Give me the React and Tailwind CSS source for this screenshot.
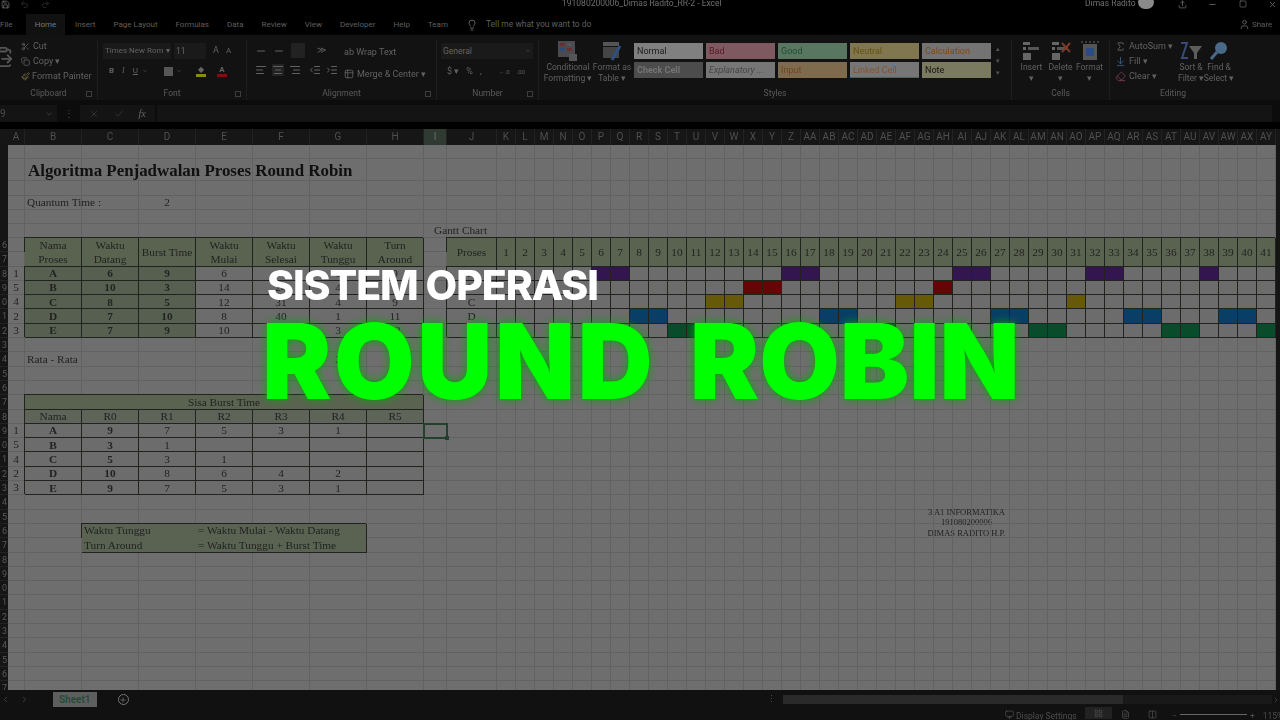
import {
  Save, Undo2, Redo2, ChevronDown, Lightbulb, User, Scissors, Copy, Paintbrush, ClipboardPaste, Minus, Square, X, Check,
  AlignLeft, AlignCenter, AlignRight, Indent, Outdent, Table2, Sigma, Eraser, ArrowDownToLine, Plus,
  ChevronLeft, ChevronRight, Monitor, LayoutGrid, FileText, Columns2, Upload,
} from "lucide-react";

const rowCount = 38;
const columnLetters = ["A", "B", "C", "D", "E", "F", "G", "H", "I", "J"];
"KLMNOPQRSTUVWXYZ".split("").forEach((l) => columnLetters.push(l));
"ABCDEFGHIJKLMNOPQRSTUVWXY".split("").forEach((l) => columnLetters.push("A" + l));

const GREEN = "bg-[#5a6350]";
const GREY = "bg-[#6c6c6c]";
const cells = new Map();

function put(c, r, text, opts = {}) {
  cells.set(c + "," + r, { text, cs: 1, rs: 1, kind: "box", bg: GREY, ...opts });
  const { cs = 1, rs = 1 } = opts;
  for (let y = r; y < r + rs; y++) {
    for (let x = c; x < c + cs; x++) {
      if (x !== c || y !== r) cells.set(x + "," + y, null);
    }
  }
}

// title and loose labels
put(1, 1, "Algoritma Penjadwalan Proses Round Robin", { kind: "title" });
put(1, 3, "Quantum Time :", { kind: "plain" });
put(3, 3, "2", { kind: "plainCenter" });
put(8, 5, "Gantt Chart", { kind: "gantt" });
put(1, 14, "Rata - Rata", { kind: "plain" });
put(6, 14, "2", { kind: "plainCenter" });
put(7, 14, "9", { kind: "plainCenter" });

// process table
["Nama\nProses", "Waktu\nDatang", "Burst Time", "Waktu\nMulai", "Waktu\nSelesai", "Waktu\nTunggu", "Turn\nAround"].forEach((h, i) =>
  put(i + 1, 6, h, { rs: 2, bg: GREEN })
);
[
  ["1", "A", "6", "9", "6", "38", "0", "9"],
  ["5", "B", "10", "3", "14", "24", "4", "7"],
  ["4", "C", "8", "5", "12", "31", "4", "9"],
  ["2", "D", "7", "10", "8", "40", "1", "11"],
  ["3", "E", "7", "9", "10", "41", "3", "12"],
].forEach((row, y) => {
  put(0, 8 + y, row[0], { kind: "plainCenter" });
  row.slice(1).forEach((v, x) =>
    put(x + 1, 8 + y, v, { bold: x < 3, bg: x < 3 ? "bg-[#576050]" : GREY })
  );
});

// remaining burst table
put(1, 17, "Sisa Burst Time", { cs: 7, bg: GREEN });
["Nama", "R0", "R1", "R2", "R3", "R4", "R5"].forEach((h, i) => put(i + 1, 18, h, { bg: "bg-[#5e6458]" }));
[
  ["1", "A", "9", "7", "5", "3", "1", ""],
  ["5", "B", "3", "1", "", "", "", ""],
  ["4", "C", "5", "3", "1", "", "", ""],
  ["2", "D", "10", "8", "6", "4", "2", ""],
  ["3", "E", "9", "7", "5", "3", "1", ""],
].forEach((row, y) => {
  put(0, 19 + y, row[0], { kind: "plainCenter" });
  row.slice(1).forEach((v, x) => put(x + 1, 19 + y, v, { bold: x < 2 }));
});
put(8, 19, "", { kind: "selected", bg: "" });

// formula note and credits
put(2, 26, "", { kind: "note", cs: 5, rs: 2, bg: "bg-[#5a6352]" });
put(34, 25, "3 A1 INFORMATIKA\n191080200006\nDIMAS RADITO H.P.", { kind: "credit" });

// gantt chart
put(9, 6, "Proses", { rs: 2, bg: GREEN });
for (let i = 1; i <= 41; i++) put(9 + i, 6, String(i), { rs: 2, bg: GREEN });
const ganttRows = {
  A: [[6, 7, 16, 17, 25, 26, 32, 33, 38], "bg-[#331650]"],
  B: [[14, 15, 24], "bg-[#640606]"],
  C: [[12, 13, 22, 23, 31], "bg-[#665a08]"],
  D: [[8, 9, 18, 19, 27, 28, 34, 35, 39, 40], "bg-[#093e66]"],
  E: [[10, 11, 20, 21, 29, 30, 36, 37, 41], "bg-[#094c2b]"],
};
Object.keys(ganttRows).forEach((name, y) => {
  const [slots, color] = ganttRows[name];
  put(9, 8 + y, name, {});
  for (let i = 1; i <= 41; i++) put(9 + i, 8 + y, "", { bg: slots.includes(i) ? color : GREY });
});

const frame = "border-r border-b border-[#20231e] shadow-[-1px_-1px_0_0_#20231e]";

function SheetCell({ c, r, cell }) {
  const place = { gridColumn: `${c + 1} / span ${cell ? cell.cs : 1}`, gridRow: `${r + 1} / span ${cell ? cell.rs : 1}` };
  if (!cell) {
    return <div style={place} className="border-r border-b border-[#626262]" />;
  }
  const base = "border-r border-b border-[#626262] flex items-center whitespace-nowrap text-[#222]";
  if (cell.kind === "title") {
    return <div style={place} className={`${base} pl-[3px] pt-[3px] text-[16.9px] font-bold text-[#101010]`}>{cell.text}</div>;
  }
  if (cell.kind === "plain") {
    return <div style={place} className={`${base} pl-[2px]`}>{cell.text}</div>;
  }
  if (cell.kind === "plainCenter") {
    return <div style={place} className={`${base} justify-center`}>{cell.text}</div>;
  }
  if (cell.kind === "gantt") {
    return <div style={place} className={`${base} pl-[10px]`}>{cell.text}</div>;
  }
  if (cell.kind === "selected") {
    return (
      <div style={place} className="relative outline-2 -outline-offset-1 outline-[#24402f]">
        <span className="absolute -right-[2px] -bottom-[2px] w-1 h-1 bg-[#24402f]" />
      </div>
    );
  }
  if (cell.kind === "note") {
    return (
      <div style={place} className={`${cell.bg} ${frame} grid grid-cols-[114px_1fr] content-center pl-[2px] leading-[14.3px] text-[#222] whitespace-nowrap`}>
        <span>Waktu Tunggu</span>
        <span>= Waktu Mulai - Waktu Datang</span>
        <span>Turn Around</span>
        <span>= Waktu Tunggu + Burst Time</span>
      </div>
    );
  }
  if (cell.kind === "credit") {
    return (
      <div style={place} className="border-r border-b border-[#626262] flex justify-center pl-[9px]">
        <div className="-mt-[3px] h-0 text-center text-[8.5px] leading-[10.5px] whitespace-pre text-[#222]">{cell.text}</div>
      </div>
    );
  }
  return (
    <div
      style={place}
      className={`${cell.bg} ${frame} flex items-center justify-center text-center whitespace-pre-line leading-[14.3px] text-[#222] ${cell.bold ? "font-bold" : ""}`}
    >
      {cell.text}
    </div>
  );
}

function Sheet() {
  const out = [];
  for (let r = 0; r < rowCount; r++) {
    for (let c = 0; c < columnLetters.length; c++) {
      const key = c + "," + r;
      if (cells.get(key) === null) continue;
      out.push(<SheetCell key={key} c={c} r={r} cell={cells.get(key)} />);
    }
  }
  return (
    <div className="flex-1 overflow-hidden bg-[#6e6e6e] font-['Liberation_Serif',serif] text-[11.3px]">
      <div className="grid grid-cols-[17px_57px_57px_57px_57px_57px_57px_57px_23px_50px_repeat(41,19px)] grid-rows-[14px_22px_14.5px_14.5px_14px_14px_repeat(32,14.3px)]">
        {out}
      </div>
    </div>
  );
}

function TitleBar() {
  return (
    <div className="h-[14px] bg-black flex items-start text-[#6f6f6f] text-[8.5px] leading-[7px] whitespace-nowrap">
      <Save size={9} className="ml-[1px] shrink-0" />
      <Undo2 size={9} className="ml-[10px] text-[#333] shrink-0" />
      <Redo2 size={9} className="ml-[12px] text-[#333] shrink-0" />
      <span className="ml-[512px] w-[523px] shrink-0">191080200006_Dimas Radito_RR-2 - Excel</span>
      <span className="w-[53px] shrink-0">Dimas Radito</span>
      <span className="w-[16px] h-[14px] -mt-[5px] rounded-full bg-[#8a8a8a] shrink-0" />
      <Upload size={9} className="ml-[24px] shrink-0" />
      <Minus size={9} className="ml-[21px] shrink-0" />
      <Square size={8} className="ml-[22px] shrink-0" />
      <X size={9} className="ml-[21px] shrink-0" />
    </div>
  );
}

function Tabs() {
  const tabs = ["Insert", "Page Layout", "Formulas", "Data", "Review", "View", "Developer", "Help", "Team"];
  return (
    <div className="h-[21px] bg-black flex items-center text-[8px] text-[#5f5f5f] whitespace-nowrap">
      <span className="w-[26px] shrink-0">File</span>
      <span className="h-full w-[39px] shrink-0 bg-[#111] text-[#777] flex items-center justify-center">Home</span>
      <div className="ml-[10px] flex gap-[18px] shrink-0">
        {tabs.map((t) => (
          <span key={t}>{t}</span>
        ))}
      </div>
      <Lightbulb size={12} className="ml-[18px] shrink-0" />
      <span className="ml-[8px] w-[753px] shrink-0 text-[8.5px]">Tell me what you want to do</span>
      <User size={11} className="shrink-0" />
      <span className="ml-[2px] shrink-0">Share</span>
    </div>
  );
}

function Group({ w, label, children, launcher = true }) {
  return (
    <div className={`${w} h-full shrink-0 flex flex-col border-r border-[#1d1d1d] relative`}>
      <div className="flex-1 min-h-0">{children}</div>
      <div className="h-[13px] text-center text-[8.5px] leading-[12px] text-[#5a5a5a]">{label}</div>
      {launcher && <span className="absolute right-[5px] bottom-[3px] w-[6px] h-[6px] border border-[#3c3c3c]" />}
    </div>
  );
}

function BigButton({ w, lines, icon }) {
  return (
    <div className={`${w} flex flex-col items-center text-center text-[8.5px] leading-[11px] text-[#606060] whitespace-nowrap`}>
      <div className="h-[21px] flex items-center">{icon}</div>
      <div className="mt-[1px]">{lines[0]}</div>
      <div>{lines[1]}</div>
    </div>
  );
}

function TableIcon({ cross }) {
  return (
    <svg width="22" height="20" viewBox="0 0 22 20">
      <rect x="2" y="1" width="7" height="3" fill="#666" />
      <rect x="2" y="6" width="3" height="3" fill="#666" />
      <rect x="7" y="6" width="11" height="3" fill="#555" />
      <rect x="2" y="12" width="8" height="7" fill="#666" />
      {cross && <path d="M12 2l8 9M20 2l-8 9" stroke="#7a3a28" strokeWidth="2" />}
    </svg>
  );
}

function FormatIcon() {
  return (
    <svg width="20" height="20" viewBox="0 0 20 20">
      <rect x="3" y="3" width="14" height="16" fill="#555" />
      <rect x="6" y="7" width="8" height="8" fill="#2a4c80" />
      <path d="M1 1h18" stroke="#666" strokeWidth="1" strokeDasharray="2 2" />
    </svg>
  );
}

function SortIcon() {
  return (
    <svg width="24" height="20" viewBox="0 0 24 20">
      <path d="M2 2h6L3 17h6" fill="none" stroke="#3a4a78" strokeWidth="2" />
      <path d="M10 5h13l-5 7v6h-3v-6z" fill="#5c5c5c" />
    </svg>
  );
}

function FindIcon() {
  return (
    <svg width="20" height="20" viewBox="0 0 20 20">
      <circle cx="12" cy="7" r="6" fill="#4a6888" />
      <path d="M8 11l-6 7" stroke="#4a6888" strokeWidth="3" />
    </svg>
  );
}

function ConditionalIcon() {
  return (
    <svg width="22" height="22" viewBox="0 0 22 22">
      <rect x="1" y="1" width="17" height="16" fill="#4a4a50" />
      <rect x="3" y="3" width="5" height="3" fill="#6a3030" />
      <rect x="10" y="3" width="5" height="3" fill="#555" />
      <rect x="3" y="8" width="5" height="3" fill="#2c4c78" />
      <rect x="10" y="8" width="5" height="3" fill="#6a3030" />
      <rect x="12" y="14" width="8" height="7" fill="#555" />
    </svg>
  );
}

function TableStyleIcon() {
  return (
    <svg width="22" height="22" viewBox="0 0 22 22">
      <rect x="2" y="2" width="16" height="4" fill="#555" />
      <rect x="2" y="7" width="16" height="11" fill="#444" />
      <path d="M19 6l-8 14" stroke="#2f4f80" strokeWidth="3" />
    </svg>
  );
}

const styleCells = [
  ["Normal", "bg-[#808080] text-[#1b1b1b]"],
  ["Bad", "bg-[#7f5960] text-[#5a1824]"],
  ["Good", "bg-[#587660] text-[#1f4e2e]"],
  ["Neutral", "bg-[#807750] text-[#665210]"],
  ["Calculation", "bg-[#737373] text-[#824810]"],
  ["Check Cell", "bg-[#4c4c4c] text-[#747474] font-bold"],
  ["Explanatory ...", "bg-[#767676] text-[#464646] italic"],
  ["Input", "bg-[#7e6a4c] text-[#70442a]"],
  ["Linked Cell", "bg-[#767676] text-[#82542c] border-b border-[#82541c]"],
  ["Note", "bg-[#7a7a60] text-[#141414]"],
];

function Ribbon() {
  return (
    <div className="h-[65px] bg-[#121212] flex text-[#626262] text-[9px] pt-[5px]">
      <Group w="w-[98px]" label="Clipboard">
        <div className="flex">
          <ClipboardPaste size={22} className="-ml-[8px] mt-[6px] text-[#555] shrink-0" />
          <div className="ml-[8px] flex flex-col gap-[2px] text-[9px] leading-[13px] whitespace-nowrap">
            <span className="flex items-center gap-[3px]"><Scissors size={9} className="-ml-[1px]" />Cut</span>
            <span className="flex items-center gap-[3px]"><Copy size={9} className="-ml-[1px]" />Copy ▾</span>
            <span className="flex items-center gap-[2px] -ml-[1px]"><Paintbrush size={9} className="text-[#7a6a40]" />Format Painter</span>
          </div>
        </div>
      </Group>
      <Group w="w-[149px]" label="Font">
        <div className="pl-[5px] pt-[3px] flex items-center gap-[3px]">
          <span className="w-[68px] h-[16px] bg-[#1a1a1a] px-[2px] text-[8px] leading-[16px] whitespace-nowrap overflow-hidden">Times New Rom ▾</span>
          <span className="w-[32px] h-[16px] bg-[#1a1a1a] px-[2px] text-[8.5px] leading-[16px]">11</span>
          <span className="ml-[4px]">A</span>
          <span className="ml-[4px] text-[8px]">A</span>
        </div>
        <div className="pl-[11px] pt-[6px] flex items-center gap-[8px] text-[8px]">
          <span className="font-bold">B</span>
          <span className="italic font-['Liberation_Serif',serif]">I</span>
          <span className="underline">U</span>
          <ChevronDown size={6} className="-ml-[4px]" />
          <span className="ml-[8px] w-[9px] h-[9px] bg-[#565656]" />
          <ChevronDown size={6} className="-ml-[5px]" />
          <span className="ml-[6px] w-[10px] border-b-[3px] border-[#8a8a10] text-center leading-[8px]">◆</span>
          <span className="ml-[3px] w-[10px] border-b-[3px] border-[#801010] text-center font-bold leading-[8px]">A</span>
        </div>
      </Group>
      <Group w="w-[190px]" label="Alignment">
        <div className="flex pl-[8px]">
          <div className="w-[89px]">
            <div className="pt-[3px] flex gap-[6px] items-center">
              <Minus size={12} />
              <Minus size={12} />
              <span className="w-[14px] h-[15px] bg-[#222]" />
              <span className="ml-[6px] text-[9px]">≫</span>
            </div>
            <div className="pt-[6px] flex gap-[5px] items-center">
              <AlignLeft size={12} />
              <AlignCenter size={12} className="bg-[#222]" />
              <AlignRight size={12} />
              <Outdent size={12} className="ml-[3px]" />
              <Indent size={12} />
            </div>
          </div>
          <div className="text-[9px]">
            <div className="pt-[6px]">ab Wrap Text</div>
            <div className="pt-[8px] flex items-center gap-[3px] whitespace-nowrap"><Table2 size={10} />Merge &amp; Center ▾</div>
          </div>
        </div>
      </Group>
      <Group w="w-[102px]" label="Number">
        <div className="pl-[4px] pt-[3px]">
          <div className="w-[92px] h-[16px] bg-[#1a1a1a] flex items-center justify-between px-[2px] text-[8.5px]">General<ChevronDown size={6} /></div>
          <div className="pt-[6px] pl-[6px] flex items-center gap-[7px] text-[9px]">
            <span>$ ▾</span>
            <span>%</span>
            <span>,</span>
            <span className="ml-[10px] text-[6px]">←.0</span>
            <span className="text-[6px]">.00</span>
          </div>
        </div>
      </Group>
      <Group w="w-[473px]" label="Styles" launcher={false}>
        <div className="flex pl-[6px]">
          <BigButton w="w-[46px]" lines={["Conditional", "Formatting ▾"]} icon={<ConditionalIcon />} />
          <BigButton w="w-[42px]" lines={["Format as", "Table ▾"]} icon={<TableStyleIcon />} />
          <div className="ml-[1px] grid grid-cols-[repeat(5,69px)] content-start gap-x-[3px] gap-y-[3px] pt-[3px] text-[9px]">
            {styleCells.map(([name, color]) => (
              <span key={name} className={`${color} h-[16px] pl-[3px] leading-[16px] whitespace-nowrap overflow-hidden`}>{name}</span>
            ))}
          </div>
          <div className="ml-[5px] mt-[3px] text-[7px] leading-[12px] text-[#555]">▴<br />▾<br />▾</div>
        </div>
      </Group>
      <Group w="w-[98px]" label="Cells" launcher={false}>
        <div className="flex pl-[5px]">
          <BigButton w="w-[29px]" lines={["Insert", "▾"]} icon={<TableIcon />} />
          <BigButton w="w-[29px]" lines={["Delete", "▾"]} icon={<TableIcon cross />} />
          <BigButton w="w-[29px]" lines={["Format", "▾"]} icon={<FormatIcon />} />
        </div>
      </Group>
      <div className="w-[172px] h-full shrink-0 flex flex-col">
        <div className="flex-1 min-h-0 flex pl-[5px] text-[9px]">
          <div className="w-[62px] flex flex-col gap-[2px] leading-[13px] whitespace-nowrap">
            <span className="flex items-center gap-[3px]"><Sigma size={11} />AutoSum ▾</span>
            <span className="flex items-center gap-[3px]"><ArrowDownToLine size={11} className="text-[#3a5a80]" />Fill ▾</span>
            <span className="flex items-center gap-[3px]"><Eraser size={11} className="text-[#7a3a4a]" />Clear ▾</span>
          </div>
          <BigButton w="w-[28px]" lines={["Sort &", "Filter ▾"]} icon={<SortIcon />} />
          <BigButton w="w-[28px]" lines={["Find &", "Select ▾"]} icon={<FindIcon />} />
        </div>
        <div className="h-[13px] pl-[50px] text-[8.5px] leading-[12px] text-[#5a5a5a]">Editing</div>
      </div>
    </div>
  );
}

function FormulaBar() {
  return (
    <div className="h-[17px] bg-[#0c0c0c] flex items-center gap-[2px] text-[#4a4a4a] text-[10px] shrink-0">
      <div className="w-[57px] h-[17px] bg-[#141414] flex items-center justify-between pr-[4px]">
        <span>9</span>
        <ChevronDown size={8} />
      </div>
      <span className="w-[19px] text-center">⋮</span>
      <div className="w-[75px] h-[17px] bg-[#141414] flex items-center justify-around px-[2px] text-[#3a3a3a]">
        <X size={10} />
        <Check size={10} />
        <span className="italic font-['Liberation_Serif',serif] text-[#666]">fx</span>
      </div>
      <div className="w-[1115px] h-[17px] bg-[#141414]" />
    </div>
  );
}

function ColumnHeader() {
  return (
    <div className="h-[16px] mt-[7px] bg-[#161616] flex text-[10px] leading-[16px] text-[#4f4f4f] shrink-0">
      <div className="w-[8px]" />
      <div className="grid grid-cols-[17px_57px_57px_57px_57px_57px_57px_57px_23px_50px_repeat(41,19px)]">
        {columnLetters.map((l) => (
          <div key={l} className={`text-center border-r border-[#222] ${l === "I" ? "bg-[#2f3a33] text-[#6a6a6a]" : ""}`}>{l}</div>
        ))}
      </div>
    </div>
  );
}

function RowNumbers() {
  const rows = [];
  for (let k = 0; k < 32; k++) {
    rows.push(
      <div key={k} className="h-[14.3px] pr-[1px] text-right text-[#585858] text-[9px] leading-[14.3px] border-b border-[#222]">
        {(k + 6) % 10}
      </div>
    );
  }
  return (
    <div className="w-[8px] bg-[#151515] overflow-hidden shrink-0 pt-[93px]">
      {rows}
    </div>
  );
}

function StatusArea() {
  return (
    <div className="h-[30px] bg-[#111] shrink-0 flex flex-col text-[#4d4d4d]">
      <div className="h-[17px] flex items-center pt-[2px]">
        <ChevronLeft size={9} className="ml-[1px]" />
        <ChevronRight size={9} className="ml-[10px]" />
        <span className="ml-[24px] w-[44px] h-full bg-[#5e5e5e] text-center text-[10px] font-semibold leading-[15px] text-[#274a37]">Sheet1</span>
        <span className="ml-[21px] w-[11px] h-[11px] rounded-full border border-[#777] flex items-center justify-center text-[#777]"><Plus size={8} /></span>
        <span className="ml-[638px] text-[9px]">⋮</span>
        <div className="ml-[7px] w-[342px] h-[9px] bg-[#2a2a2a]" />
        <div className="w-[150px] h-[9px] bg-[#191919]" />
        <ChevronRight size={8} />
      </div>
      <div className="flex-1 flex items-start text-[8.5px] leading-[12px] whitespace-nowrap overflow-hidden pt-[3px] pl-[1005px]">
        <Monitor size={9} className="mr-[2px] shrink-0" />
        <span className="w-[69px] shrink-0">Display Settings</span>
        <span className="w-[27px] h-[12px] bg-[#222] -mt-[3px] flex items-center justify-center shrink-0"><LayoutGrid size={9} /></span>
        <FileText size={9} className="ml-[9px] shrink-0" />
        <Columns2 size={9} className="ml-[18px] shrink-0" />
        <span className="ml-[15px] shrink-0">−</span>
        <span className="ml-[3px] w-[67px] h-[1px] mt-[4px] bg-[#666] shrink-0" />
        <span className="ml-[3px] shrink-0">+</span>
        <span className="ml-[8px] shrink-0">115%</span>
      </div>
    </div>
  );
}

function App() {
  return (
    <div className="relative w-[1280px] h-[720px] overflow-hidden bg-black font-['Roboto',sans-serif]">
      <div className="w-full h-full flex flex-col blur-[0.4px]">
        <TitleBar />
        <Tabs />
        <Ribbon />
        <div className="h-[5px] bg-[#0c0c0c] shrink-0" />
        <FormulaBar />
        <ColumnHeader />
        <div className="flex-1 min-h-0 flex">
          <RowNumbers />
          <Sheet />
          <div className="w-[4px] bg-[#151515] shrink-0" />
        </div>
        <StatusArea />
      </div>

      {/* overlay heading */}
      <div className="absolute left-[267px] top-[260px] text-white font-['Inter',sans-serif] font-extrabold text-[41px] tracking-[-1.1px] leading-[50px] whitespace-nowrap">
        SISTEM OPERASI
      </div>
      <div className="absolute left-[262px] top-[298px] text-[#00ff00] font-['Inter',sans-serif] font-black text-[104px] tracking-[2.6px] leading-[126px] whitespace-nowrap [text-shadow:0_0_10px_#00aa00]">
        ROUND <span className="ml-[11px] tracking-[0px]">ROBIN</span>
      </div>
    </div>
  );
}

export default App;
